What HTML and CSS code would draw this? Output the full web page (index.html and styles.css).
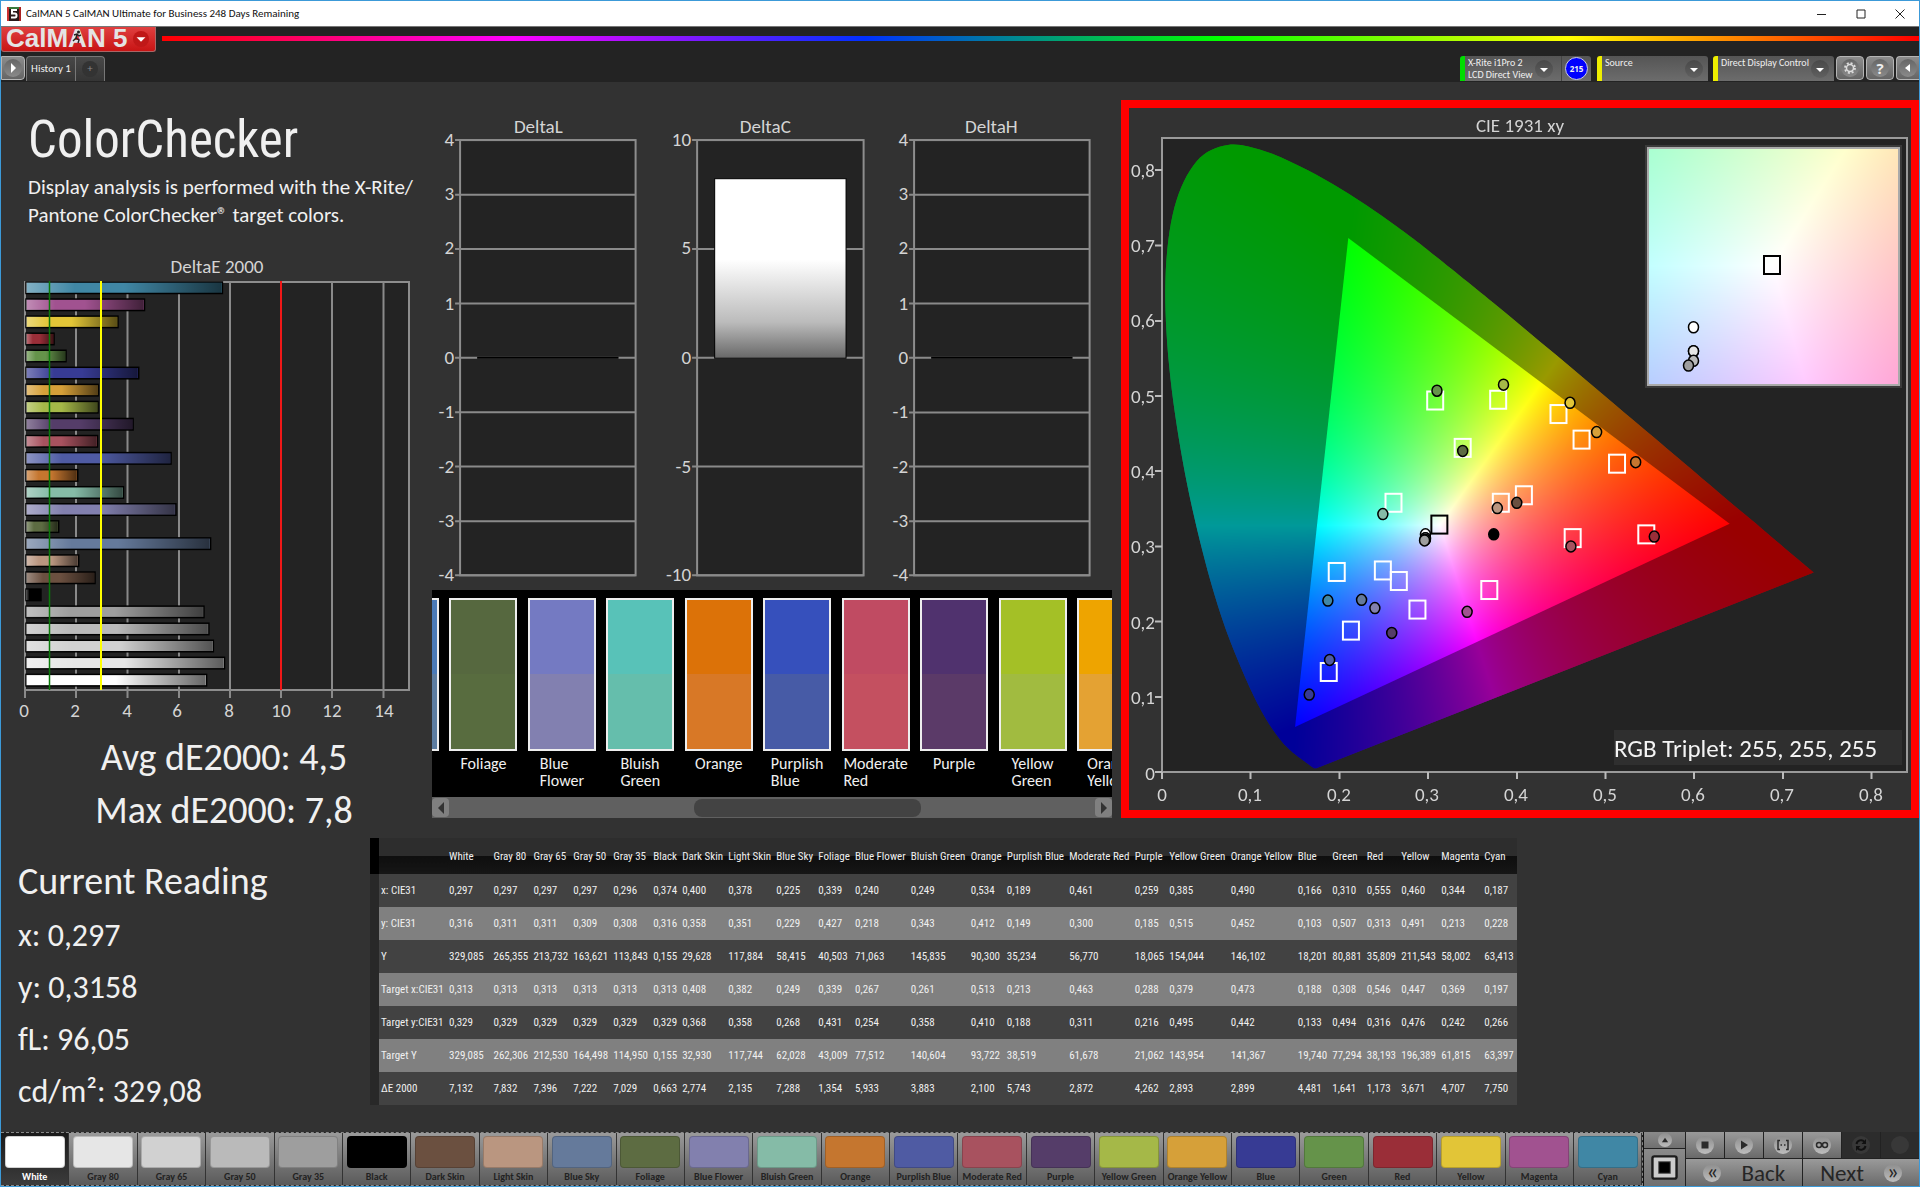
FILE: index.html
```html
<!DOCTYPE html>
<html lang="en">
<head>
<meta charset="utf-8">
<title>CalMAN 5</title>
<link rel="stylesheet" href="styles.css">
</head>
<body>
<header class="titlebar">
  <svg class="app-icon" viewBox="0 0 14 14" aria-hidden="true"><rect width="14" height="14" fill="#2a1a1a"/><rect width="2" height="14" fill="#c33"/><rect x="12" width="2" height="14" fill="#a22"/><rect x="2" width="10" height="2" fill="#3a7a3a"/><path d="M10 3H5v3.500h3q1.500 0 1.500 2t-1.500 2H4" fill="none" stroke="#fff" stroke-width="2"/></svg>
  <span class="app-title">CalMAN 5 CalMAN Ultimate for Business 248 Days Remaining</span>
  <div class="window-buttons">
    <button type="button" aria-label="Minimize"><svg viewBox="0 0 10 10"><path d="M0 5.500h9"/></svg></button>
    <button type="button" aria-label="Maximize"><svg viewBox="0 0 10 10"><path d="M1 1h8v8h-8z"/></svg></button>
    <button type="button" aria-label="Close"><svg viewBox="0 0 10 10"><path d="M.5.5l9 9M9.500.5l-9 9"/></svg></button>
  </div>
</header>

<div class="brandbar">
  <button type="button" class="brand"><span>CalMAN 5</span><svg class="runner" viewBox="0 0 10 14" aria-hidden="true"><circle cx="6.500" cy="2" r="1.500" fill="#222"/><path d="M2 5l3-1 2 2 2-1M5 4.500L4 8l3 2-1 3M4 8l-3 3" fill="none" stroke="#222" stroke-width="1.400"/></svg><i class="knob red"><svg viewBox="0 0 18 18"><path d="M4 7h10l-5 5z" fill="#fff"/></svg></i></button>
  <div class="rainbow"></div>
</div>

<nav class="toolbar">
  <button type="button" class="key play" aria-label="Show history"><i class="knob"><svg viewBox="0 0 18 18"><path d="M7 4l5 5-5 5z" fill="#fff"/></svg></i></button>
  <div class="tabs">
    <button type="button" class="tab">History 1</button>
    <button type="button" class="tab add" aria-label="Add tab"><i class="knob dark">+</i></button>
  </div>
  <div class="devices">
    <button type="button" class="device green meter"><span>X-Rite i1Pro 2<br>LCD Direct View</span><i class="knob dark"><svg viewBox="0 0 18 18"><path d="M5 8h8l-4 4z" fill="#fff"/></svg></i></button>
    <button type="button" class="count"><b>215</b></button>
    <button type="button" class="device source"><span>Source</span><i class="knob dark"><svg viewBox="0 0 18 18"><path d="M5 8h8l-4 4z" fill="#fff"/></svg></i></button>
    <button type="button" class="device display"><span>Direct Display Control</span><i class="knob dark"><svg viewBox="0 0 18 18"><path d="M5 8h8l-4 4z" fill="#fff"/></svg></i></button>
    <button type="button" class="key" aria-label="Settings"><i class="knob"><svg viewBox="0 0 18 18"><circle cx="9" cy="9" r="3.500" fill="none" stroke="#ddd" stroke-width="1.500"/><circle cx="9" cy="9" r="5" fill="none" stroke="#ddd" stroke-width="1.800" stroke-dasharray="2 1.930"/></svg></i></button>
    <button type="button" class="key" aria-label="Help"><i class="knob help">?</i></button>
    <button type="button" class="key last" aria-label="Collapse"><i class="knob"><svg viewBox="0 0 18 18"><path d="M11 5L6 9l5 4z" fill="#fff"/></svg></i></button>
  </div>
</nav>

<main>
  <div class="charts">
    <section class="summary">
      <h1>ColorChecker</h1>
      <p class="intro">Display analysis is performed with the X-Rite/<br>Pantone ColorChecker® target colors.</p>
      <svg class="chart" viewBox="0 0 431 468" role="img" aria-label="DeltaE 2000">
        <defs><linearGradient id="sheen"><stop offset="0" stop-color="#fff" stop-opacity=".35"/><stop offset=".25" stop-color="#fff" stop-opacity="0"/><stop offset=".5" stop-color="#000" stop-opacity="0"/><stop offset="1" stop-color="#000" stop-opacity=".6"/></linearGradient></defs>
        <rect class="plot" x="24" y="28" width="384" height="408"/>
        <path class="grid" d="M75 28v416M126.500 28v416M178 28v416M229 28v416M280 28v416M331 28v416M382.500 28v416M24 436v8"/>
        <g id="bars"></g>
        <path d="M48.500 27v409" stroke="#0a7a0a" stroke-width="1.500"/><path d="M100 27v409" stroke="#ff0" stroke-width="2"/><path d="M280 27v409" stroke="#f01818" stroke-width="2"/>
        <g class="mid"><text x="216" y="19">DeltaE 2000</text>
        <text x="23" y="463">0</text><text x="74" y="463">2</text><text x="126" y="463">4</text><text x="176" y="463">6</text><text x="228" y="463">8</text><text x="280" y="463">10</text><text x="331" y="463">12</text><text x="383" y="463">14</text></g>
      </svg>
      <div class="stats"><p>Avg dE2000: 4,5</p><p>Max dE2000: 7,8</p></div>
    </section>

    <section class="middle">
      <div class="deltas">
        <svg class="chart" viewBox="0 0 226 472" role="img" aria-label="DeltaL">
          <rect class="plot" x="28" y="28" width="175" height="434"/>
          <path class="grid" d="M23 28h180M23 82.500h180M23 136.500h180M23 191h180M23 245h180M23 299.500h180M23 353.500h180M23 408h180M23 462h180"/>
          <path d="M45 245h141" stroke="#000" stroke-width="2"/>
          <text class="mid" x="106" y="21">DeltaL</text>
          <g class="end"><text x="22" y="34">4</text><text x="22" y="88">3</text><text x="22" y="142">2</text><text x="22" y="197">1</text><text x="22" y="251">0</text><text x="22" y="305">-1</text><text x="22" y="360">-2</text><text x="22" y="414">-3</text><text x="22" y="468">-4</text></g>
        </svg>
        <svg class="chart" viewBox="0 0 226 472" role="img" aria-label="DeltaC">
          <defs><linearGradient id="fade" x2="0" y2="1"><stop offset=".45" stop-color="#fff"/><stop offset=".8" stop-color="#bbb"/><stop offset="1" stop-color="#686868"/></linearGradient></defs>
          <rect class="plot" x="38" y="28" width="166" height="434"/>
          <path class="grid" d="M33 28h171M33 136.500h171M33 245h171M33 353.500h171M33 462h171"/>
          <rect x="55.500" y="66.500" width="131" height="179" fill="url(#fade)" stroke="#000"/>
          <text class="mid" x="106" y="21">DeltaC</text>
          <g class="end"><text x="32" y="34">10</text><text x="32" y="142">5</text><text x="32" y="251">0</text><text x="32" y="360">-5</text><text x="32" y="468">-10</text></g>
        </svg>
        <svg class="chart" viewBox="0 0 226 472" role="img" aria-label="DeltaH">
          <rect class="plot" x="29" y="28" width="175" height="434"/>
          <path class="grid" d="M24 28h180M24 82.500h180M24 136.500h180M24 191h180M24 245h180M24 299.500h180M24 353.500h180M24 408h180M24 462h180"/>
          <path d="M46 245h141" stroke="#000" stroke-width="2"/>
          <text class="mid" x="106" y="21">DeltaH</text>
          <g class="end"><text x="23" y="34">4</text><text x="23" y="88">3</text><text x="23" y="142">2</text><text x="23" y="197">1</text><text x="23" y="251">0</text><text x="23" y="305">-1</text><text x="23" y="360">-2</text><text x="23" y="414">-3</text><text x="23" y="468">-4</text></g>
        </svg>
      </div>
      <div class="compare">
        <ul>
          <li><i style="--a:#4a7ab8;--b:#5c7ca0"></i><span>Blue Sky</span></li>
          <li><i style="--a:#56683f;--b:#586c3f"></i><span>Foliage</span></li>
          <li><i style="--a:#747ac2;--b:#8280b0"></i><span>Blue Flower</span></li>
          <li><i style="--a:#58c2b8;--b:#65beac"></i><span>Bluish Green</span></li>
          <li><i style="--a:#dc7208;--b:#d87826"></i><span>Orange</span></li>
          <li><i style="--a:#3650bc;--b:#475ba6"></i><span>Purplish Blue</span></li>
          <li><i style="--a:#c04b62;--b:#c45060"></i><span>Moderate Red</span></li>
          <li><i style="--a:#50326e;--b:#5b3a68"></i><span>Purple</span></li>
          <li><i style="--a:#a4c026;--b:#a1bb40"></i><span>Yellow Green</span></li>
          <li><i style="--a:#eea400;--b:#e4a233"></i><span>Orange Yellow</span></li>
        </ul>
        <div class="scroll">
          <button type="button" aria-label="Scroll left"><svg viewBox="0 0 16 18"><path d="M11 3v12L5 9z"/></svg></button>
          <div class="track"><div class="thumb"></div></div>
          <button type="button" aria-label="Scroll right"><svg viewBox="0 0 16 18"><path d="M5 3v12l6-6z"/></svg></button>
        </div>
      </div>
    </section>

    <section class="cie">
      <canvas id="gamut" width="782" height="702"></canvas>
      <svg class="chart" viewBox="0 0 782 702" role="img" aria-label="CIE 1931 xy">
        <rect x="33" y="30" width="745" height="634" fill="none" stroke="#9a9a9a" stroke-width="2"/>
        <path class="grid ticks" d="M26 62h7M26 137.500h7M26 213h7M26 288h7M26 363h7M26 438.500h7M26 513.500h7M26 589h7M26 664h7M33 664v7M121.500 664v7M210.500 664v7M299 664v7M388 664v7M476.500 664v7M565 664v7M654 664v7M742.500 664v7"/>
        <g class="mid"><text x="391" y="24">CIE 1931 xy</text><text x="33" y="693">0</text><text x="121" y="693">0,1</text><text x="210" y="693">0,2</text><text x="298" y="693">0,3</text><text x="387" y="693">0,4</text><text x="476" y="693">0,5</text><text x="564" y="693">0,6</text><text x="653" y="693">0,7</text><text x="742" y="693">0,8</text></g>
        <g class="end"><text x="26" y="69">0,8</text><text x="26" y="144">0,7</text><text x="26" y="219">0,6</text><text x="26" y="295">0,5</text><text x="26" y="370">0,4</text><text x="26" y="445">0,3</text><text x="26" y="521">0,2</text><text x="26" y="596">0,1</text><text x="26" y="672">0</text></g>
        <g id="markers"></g>
        <path d="M516 37h257v243h-257zM519 40v237h251v-237z" fill="#3a3a3a" fill-rule="evenodd"/>
        <rect x="519" y="40" width="251" height="237" fill="none" stroke="#aaa" stroke-width="2"/>
        <g id="inset-markers"></g>
        <rect x="485" y="622" width="288" height="35" fill="#2f2f2f"/>
        <text class="triplet" x="485" y="649">RGB Triplet: 255, 255, 255</text>
      </svg>
    </section>
  </div>

  <div class="readouts">
    <section class="reading">
      <h2>Current Reading</h2>
      <p>x: 0,297</p><p>y: 0,3158</p><p>fL: 96,05</p><p>cd/m²: 329,08</p>
    </section>
    <table id="results">
      <thead><tr><th></th><th>White</th><th>Gray 80</th><th>Gray 65</th><th>Gray 50</th><th>Gray 35</th><th>Black</th><th>Dark Skin</th><th>Light Skin</th><th>Blue Sky</th><th>Foliage</th><th>Blue Flower</th><th>Bluish Green</th><th>Orange</th><th>Purplish Blue</th><th>Moderate Red</th><th>Purple</th><th>Yellow Green</th><th>Orange Yellow</th><th>Blue</th><th>Green</th><th>Red</th><th>Yellow</th><th>Magenta</th><th>Cyan</th></tr></thead>
      <tbody>
        <tr><th>x: CIE31</th><td>0,297</td><td>0,297</td><td>0,297</td><td>0,297</td><td>0,296</td><td>0,374</td><td>0,400</td><td>0,378</td><td>0,225</td><td>0,339</td><td>0,240</td><td>0,249</td><td>0,534</td><td>0,189</td><td>0,461</td><td>0,259</td><td>0,385</td><td>0,490</td><td>0,166</td><td>0,310</td><td>0,555</td><td>0,460</td><td>0,344</td><td>0,187</td></tr>
        <tr><th>y: CIE31</th><td>0,316</td><td>0,311</td><td>0,311</td><td>0,309</td><td>0,308</td><td>0,316</td><td>0,358</td><td>0,351</td><td>0,229</td><td>0,427</td><td>0,218</td><td>0,343</td><td>0,412</td><td>0,149</td><td>0,300</td><td>0,185</td><td>0,515</td><td>0,452</td><td>0,103</td><td>0,507</td><td>0,313</td><td>0,491</td><td>0,213</td><td>0,228</td></tr>
        <tr><th>Y</th><td>329,085</td><td>265,355</td><td>213,732</td><td>163,621</td><td>113,843</td><td>0,155</td><td>29,628</td><td>117,884</td><td>58,415</td><td>40,503</td><td>71,063</td><td>145,835</td><td>90,300</td><td>35,234</td><td>56,770</td><td>18,065</td><td>154,044</td><td>146,102</td><td>18,201</td><td>80,881</td><td>35,809</td><td>211,543</td><td>58,002</td><td>63,413</td></tr>
        <tr><th>Target x:CIE31</th><td>0,313</td><td>0,313</td><td>0,313</td><td>0,313</td><td>0,313</td><td>0,313</td><td>0,408</td><td>0,382</td><td>0,249</td><td>0,339</td><td>0,267</td><td>0,261</td><td>0,513</td><td>0,213</td><td>0,463</td><td>0,288</td><td>0,379</td><td>0,473</td><td>0,188</td><td>0,308</td><td>0,546</td><td>0,447</td><td>0,369</td><td>0,197</td></tr>
        <tr><th>Target y:CIE31</th><td>0,329</td><td>0,329</td><td>0,329</td><td>0,329</td><td>0,329</td><td>0,329</td><td>0,368</td><td>0,358</td><td>0,268</td><td>0,431</td><td>0,254</td><td>0,358</td><td>0,410</td><td>0,188</td><td>0,311</td><td>0,216</td><td>0,495</td><td>0,442</td><td>0,133</td><td>0,494</td><td>0,316</td><td>0,476</td><td>0,242</td><td>0,266</td></tr>
        <tr><th>Target Y</th><td>329,085</td><td>262,306</td><td>212,530</td><td>164,498</td><td>114,950</td><td>0,155</td><td>32,930</td><td>117,744</td><td>62,028</td><td>43,009</td><td>77,512</td><td>140,604</td><td>93,722</td><td>38,519</td><td>61,678</td><td>21,062</td><td>143,954</td><td>141,367</td><td>19,740</td><td>77,294</td><td>38,193</td><td>196,389</td><td>61,815</td><td>63,397</td></tr>
        <tr><th>ΔE 2000</th><td>7,132</td><td>7,832</td><td>7,396</td><td>7,222</td><td>7,029</td><td>0,663</td><td>2,774</td><td>2,135</td><td>7,288</td><td>1,354</td><td>5,933</td><td>3,883</td><td>2,100</td><td>5,743</td><td>2,872</td><td>4,262</td><td>2,893</td><td>2,899</td><td>4,481</td><td>1,641</td><td>1,173</td><td>3,671</td><td>4,707</td><td>7,750</td></tr>
      </tbody>
    </table>
  </div>
</main>

<footer class="controls">
  <div class="patches" id="patches">
    <button type="button" class="selected" style="--c:#ffffff"><i></i>White</button>
    <button type="button" style="--c:#e6e6e6"><i></i>Gray 80</button>
    <button type="button" style="--c:#d1d1d1"><i></i>Gray 65</button>
    <button type="button" style="--c:#bababa"><i></i>Gray 50</button>
    <button type="button" style="--c:#9e9e9e"><i></i>Gray 35</button>
    <button type="button" style="--c:#000000"><i></i>Black</button>
    <button type="button" style="--c:#6b5040"><i></i>Dark Skin</button>
    <button type="button" style="--c:#ba9680"><i></i>Light Skin</button>
    <button type="button" style="--c:#657a9b"><i></i>Blue Sky</button>
    <button type="button" style="--c:#5d6c42"><i></i>Foliage</button>
    <button type="button" style="--c:#8280ae"><i></i>Blue Flower</button>
    <button type="button" style="--c:#85bba7"><i></i>Bluish Green</button>
    <button type="button" style="--c:#c5762f"><i></i>Orange</button>
    <button type="button" style="--c:#4f5ba3"><i></i>Purplish Blue</button>
    <button type="button" style="--c:#a8525f"><i></i>Moderate Red</button>
    <button type="button" style="--c:#553d69"><i></i>Purple</button>
    <button type="button" style="--c:#a5b848"><i></i>Yellow Green</button>
    <button type="button" style="--c:#d6a039"><i></i>Orange Yellow</button>
    <button type="button" style="--c:#373b94"><i></i>Blue</button>
    <button type="button" style="--c:#65934a"><i></i>Green</button>
    <button type="button" style="--c:#9a2e38"><i></i>Red</button>
    <button type="button" style="--c:#e2c537"><i></i>Yellow</button>
    <button type="button" style="--c:#a15290"><i></i>Magenta</button>
    <button type="button" style="--c:#4087a5"><i></i>Cyan</button>
  </div>
  <div class="patch-window">
    <button type="button" aria-label="More"><i class="knob pale small"><svg viewBox="0 0 18 18"><path d="M5 12l4-6 4 6z"/></svg></i></button>
    <button type="button" class="stop-box" aria-label="Pattern window"><svg viewBox="0 0 28 26"><rect x="1.500" y="1.500" width="25" height="23" rx="2" fill="#ccc" stroke="#1c1c1c" stroke-width="2.500"/><rect x="8" y="7" width="12" height="12" fill="#000" stroke="#555"/></svg></button>
  </div>
  <div class="transport">
    <button type="button" aria-label="Stop"><i class="knob pale"><svg viewBox="0 0 18 18"><path d="M5.500 5.500h7v7h-7z"/></svg></i></button>
    <button type="button" aria-label="Play"><i class="knob pale"><svg viewBox="0 0 18 18"><path d="M6 4.500L13 9l-7 4.500z"/></svg></i></button>
    <button type="button" aria-label="Read series"><i class="knob pale"><svg viewBox="0 0 18 18"><path d="M6 4.500H4v9h2M12 4.500h2v9h-2M6.500 9h1.500M10 9h1.500" fill="none" stroke="#2b2b2b" stroke-width="1.500"/></svg></i></button>
    <button type="button" aria-label="Continuous"><i class="knob pale"><svg viewBox="0 0 18 18"><g fill="none" stroke="#2b2b2b" stroke-width="1.500"><circle cx="6" cy="9" r="2.500"/><circle cx="12" cy="9" r="2.500"/></g></svg></i></button>
    <button type="button" class="off" aria-label="Refresh"><i class="knob"><svg viewBox="0 0 18 18"><path d="M4.500 8a4.500 4.500 0 0 1 8-2M13.500 10a4.500 4.500 0 0 1-8 2" fill="none" stroke="#111" stroke-width="2"/><path d="M14 3v5H9.500zM4 15v-5h4.500z" fill="#111"/></svg></i></button>
    <button type="button" class="off" aria-label="Record"><i class="knob"></i></button>
    <button type="button" class="wide"><i class="knob pale">«</i>Back</button>
    <button type="button" class="wide">Next<i class="knob pale">»</i></button>
  </div>
</footer>
<script src="script.js"></script>
</body>
</html>
```
FILE: styles.css
```css
* { box-sizing: border-box; }
body {
  margin: 0; min-height: 100vh; display: flex; flex-direction: column;
  border: 1px solid #3c9ad8; background: #323232; color: #f0f0f0;
  font-family: Carlito, Lato, "Open Sans", sans-serif;
}
button { margin: 0; padding: 0; border: 0; background: none; color: inherit; font: inherit; display: flex; align-items: center; justify-content: center; }
h1, h2, p, ul { margin: 0; padding: 0; font-weight: normal; list-style: none; }
svg { display: block; }

/* window frame */
.titlebar { height: 25px; background: #fff; color: #111; display: flex; align-items: center; gap: 5px; padding-left: 6px; }
.app-icon { width: 14px; height: 14px; }
.app-title { font-size: 11px; }
.window-buttons { margin-left: auto; display: flex; }
.window-buttons button { width: 39px; height: 24px; }
.window-buttons svg { width: 10px; height: 10px; fill: none; stroke: #222; stroke-width: 1; }

.brandbar { height: 30px; background: #232323; border-top: 1px solid #777; display: flex; gap: 6px; }
.brand { width: 155px; height: 25px; padding: 0 6px 0 4px; position: relative; justify-content: space-between; border-radius: 0 0 3px 3px; background: linear-gradient(#e04040, #c81414); border: 1px solid #a66; border-top: 0; }
.brand span { font: bold 26px/22px "Liberation Sans", Arial, sans-serif; color: #e4e4e4; padding-bottom: 3px; white-space: nowrap; }
.runner { position: absolute; left: 70px; top: 3px; width: 10px; height: 14px; }
.rainbow { flex: 1; height: 5px; margin-top: 9px; background: linear-gradient(90deg, #f00, #f0f 20%, #0030ff 40%, #0f0 60%, #ff0 80%, #f00); }

.knob { width: 18px; height: 18px; border-radius: 50%; background: linear-gradient(#666, #8a8a8a); display: flex; align-items: center; justify-content: center; font-style: normal; }
.knob svg { width: 18px; height: 18px; }
.knob.red { width: 16px; height: 16px; background: #c01818; }
.knob.dark { background: linear-gradient(#484848, #606060); }
.knob.pale { background: linear-gradient(#8e8e8e, #bdbdbd); fill: #2b2b2b; }
.knob.small { width: 14px; height: 14px; }
.knob.help { font: bold 15px "Open Sans", sans-serif; color: #eee; }

/* tabs and device pickers */
.toolbar { height: 26px; background: #232323; display: flex; align-items: flex-start; font-size: 11px; line-height: 12px; }
.key { width: 28px; height: 24px; border: 1px solid #b5b5b5; border-radius: 4px; background: linear-gradient(#8c8c8c, #656565); }
.play { width: 24px; border-radius: 0 4px 4px 0; }
.key.last { width: 23px; border-right: 0; border-radius: 4px 0 0 4px; }
.tabs { display: flex; margin-left: 1px; }
.tab { height: 25px; width: 50px; border: 1px solid #777; border-bottom: 0; border-radius: 4px 0 0 0; background: linear-gradient(#484848, #353535); }
.tab.add { width: 29px; border-radius: 0 4px 0 0; border-left: 0; }
.tab .knob { background: #333; color: #888; width: 16px; height: 16px; }
.devices { margin-left: auto; display: flex; gap: 2px; }
.device { height: 25px; justify-content: space-between; align-items: flex-start; padding: 1px 8px 0 3px; border-left: 5px solid #ee0; border-radius: 3px 3px 0 0; background: linear-gradient(#555, #6c6c6c); text-align: left; font-size: 10px; white-space: nowrap; }
.device .knob { margin-top: 3px; }
.device.green { border-left-color: #0d0; }
.meter { width: 101px; margin-right: -2px; border-radius: 3px 0 0 0; }
.count { width: 30px; height: 25px; margin-right: 4px; border-left: 1px solid #444; background: linear-gradient(#555, #6c6c6c); border-radius: 0 3px 0 0; }
.count b { width: 23px; height: 23px; border: 1px solid #ccd; border-radius: 50%; background: #00f; font: bold 8px/21px "Open Sans", sans-serif; }
.source { width: 111px; margin-right: 3px; padding-right: 5px; }
.display { width: 121px; padding-right: 5px; }

/* chart row */
main { flex: 1; display: flex; flex-direction: column; }
.charts { display: grid; grid-template-columns: 431fr 689fr 798fr; align-items: start; padding-top: 18px; }
.chart { width: 100%; font-size: 19px; fill: #d4d4d4; }
.plot { fill: #232323; stroke: #8d8d8d; stroke-width: 2; }
.grid { fill: none; stroke: #8a8a8a; stroke-width: 2; }
.ticks { stroke: #bbb; }
.mid { text-anchor: middle; }
.end { text-anchor: end; }
.summary h1 { padding: 8px 0 0 27px; font: 51px/64px "Roboto Condensed", Carlito, sans-serif; }
.intro { padding: 1px 0 25px 27px; font-size: 21px; line-height: 28px; white-space: nowrap; }
.stats { font-size: 38px; line-height: 53px; padding-top: 9px; padding-left: 15px; text-align: center; }
.middle { padding: 12px 9px 0 0; }
.deltas { display: grid; grid-template-columns: repeat(3, 1fr); }
.compare { margin-top: 5px; background: #000; overflow: hidden; }
.compare ul { height: 207px; margin: 0 -33px 0 -61px; padding-top: 8px; display: flex; justify-content: space-between; }
.compare li { width: 68px; display: flex; flex-direction: column; align-items: center; gap: 4px; font-size: 16px; line-height: 17px; }
.compare li i { width: 68px; height: 153px; border: 2px solid #eee; background: linear-gradient(var(--a) 50%, var(--b) 50%); }
.compare li span { width: min-content; }
.scroll { height: 21px; background: #606060; display: flex; align-items: center; }
.scroll button { width: 17px; height: 19px; border-radius: 4px; background: #808080; }
.scroll svg { width: 16px; height: 18px; fill: #333; }
.track { flex: 1; height: 18px; }
.thumb { width: 35%; height: 18px; margin-left: 38%; border-radius: 8px; background: #434343; }
.cie { border: 8px solid #f00; position: relative; }
.cie canvas { display: block; width: 100%; }
.cie .chart { position: absolute; inset: 0; height: 100%; }
.triplet { font-size: 25px; fill: #f4f4f4; }

/* readings */
.readouts { display: flex; align-items: flex-start; padding-top: 1px; }
.reading { width: 369px; padding: 14px 0 0 17px; font-size: 32px; line-height: 52px; }
.reading h2 { font-size: 38px; line-height: 58px; }
table { width: 1147px; border-collapse: collapse; font: 11px "Roboto Condensed", "Open Sans Condensed", sans-serif; white-space: nowrap; }
th, td { padding: 0 3px 0 2px; text-align: left; font-weight: normal; height: 33px; }
thead th { height: 36px; background: linear-gradient(#2d2d2d 50%, #0e0e0e 50%, #161616); }
th:first-child { border-left: 9px solid #282828; }
thead th:first-child { border-left-color: #000; }
tbody tr { background: #424242; }
tbody tr:nth-child(even) { background: #808080; }

/* bottom bar */
.controls { display: flex; height: 54px; background: #222; }
.patches { flex: 1644; display: grid; grid-template-columns: repeat(24, 1fr); border: 1px dashed #888; border-width: 1px 1px 1px 0; color: #222; font-size: 10px; line-height: 12px; font-weight: bold; }
.patches button { flex-direction: column; justify-content: flex-start; gap: 3px; padding-top: 3px; border-right: 1px solid #333; background: linear-gradient(#9a9a9a, #5a5a5a); white-space: nowrap; }
.patches i { width: 60px; height: 32px; border-radius: 4px; background: var(--c); border: 1px solid rgba(0,0,0,.18); }
.patches .selected { background: linear-gradient(#1a1a1a, #3c3c3c); color: #fff; }
.patch-window { flex: 41; display: grid; grid-template-rows: 16px 1fr; gap: 1px; border-left: 1px solid #111; }
.patch-window button { background: linear-gradient(#8a8a8a, #707070); }
.stop-box svg { width: 27px; height: 27px; }
.transport { flex: 233; display: grid; grid-template: 26px 27px / repeat(6, 1fr); gap: 1px; margin-left: 1px; color: #262626; }
.transport button { background: linear-gradient(#9a9a9a, #6a6a6a); font-size: 23px; gap: 20px; line-height: 24px; }
.transport .off { background: #2c2c2c; }
.transport .off .knob { background: #383838; }
.transport .wide { grid-column: span 3; }
.transport .wide .knob { padding-bottom: 4px; }
```
FILE: script.js
```js
const cells = row => [...document.querySelectorAll(`#results tbody tr:nth-child(${row}) td`)]
  .map(td => parseFloat(td.textContent.replace(',', '.')));
const xs = cells(1), ys = cells(2), tx = cells(4), ty = cells(5), de = cells(7);
const colors = [...document.querySelectorAll('#patches button')].map(b => b.style.getPropertyValue('--c'));
const NS = 'http://www.w3.org/2000/svg';
function add(parent, tag, attrs) {
  const el = document.createElementNS(NS, tag);
  for (const k in attrs) el.setAttribute(k, attrs[k]);
  parent.appendChild(el);
}

// DeltaE bars, last patch on top
const bars = document.getElementById('bars');
de.forEach((v, i) => {
  const y = 28 + (23 - i) * 17.06, w = v * 25.6 - 2;
  add(bars, 'rect', { x: 25, y, width: w, height: 11.5, fill: colors[i], stroke: '#000', 'stroke-width': 1.5 });
  add(bars, 'rect', { x: 25, y: y + .5, width: w - 1, height: 10.5, fill: 'url(#sheen)' });
});

// chromaticity diagram
const X0 = 33, Y0 = 664, SX = 887, SY = 752, WX = .3127, WY = .329;
const locus = [[.1741,.005],[.1714,.0051],[.1689,.0069],[.1644,.0109],[.1566,.0177],[.151,.0227],[.144,.0297],[.1355,.0399],[.1241,.0578],[.1096,.0868],[.0913,.1327],[.0687,.2007],[.0454,.295],[.0235,.4127],[.0082,.5384],[.0039,.6548],[.0139,.7502],[.0389,.812],[.0743,.8338],[.1142,.8262],[.1547,.8059],[.1929,.7816],[.2296,.7543],[.2658,.7243],[.3016,.6923],[.3731,.6245],[.4441,.5547],[.5125,.4866],[.5752,.4242],[.627,.3725],[.6658,.334],[.6915,.3083],[.719,.2809],[.73,.27],[.7347,.2653]]
  .map(([x, y]) => [X0 + x * SX, Y0 - y * SY]);
const canvas = document.getElementById('gamut'), ctx = canvas.getContext('2d');
const tri = new Path2D();
[[.64, .33], [.21, .71], [.15, .06]].forEach(([x, y]) => tri.lineTo(X0 + x * SX, Y0 - y * SY));
tri.closePath();

// smooth curve through every locus point
const shape = new Path2D();
shape.moveTo(...locus[0]);
for (let i = 0; i < locus.length - 1; i++) {
  const b = locus[i], c = locus[i + 1], a = locus[i - 1] || b, d = locus[i + 2] || c;
  shape.bezierCurveTo(b[0] + (c[0] - a[0]) / 6, b[1] + (c[1] - a[1]) / 6, c[0] - (d[0] - b[0]) / 6, c[1] - (d[1] - b[1]) / 6, c[0], c[1]);
}
shape.closePath();

function rgb(x, y) {
  const X = x / y, Z = (1 - x - y) / y;
  const lin = [2.0414 * X - .5649 - .3447 * Z, -.9693 * X + 1.876 + .0416 * Z, .0134 * X - .1184 + 1.0154 * Z].map(v => Math.max(v, 0));
  const m = Math.max(...lin);
  return lin.map(v => 255 * v / m);
}
function raster(w, h, at) {
  const c = document.createElement('canvas'); c.width = w; c.height = h;
  const g = c.getContext('2d'), d = g.createImageData(w, h);
  for (let j = 0; j < h; j++) for (let i = 0; i < w; i++) {
    const [x, y] = at(i, j), p = 4 * (j * w + i), col = rgb(x, Math.max(y, .001));
    d.data[p] = col[0]; d.data[p + 1] = col[1]; d.data[p + 2] = col[2]; d.data[p + 3] = 255;
  }
  g.putImageData(d, 0, 0);
  return c;
}
ctx.fillStyle = '#232323';
ctx.fillRect(33, 30, 745, 634);
const full = raster(782, 702, (i, j) => [(i - X0) / SX, (Y0 - j) / SY]);
ctx.save(); ctx.clip(shape); ctx.drawImage(full, 0, 0);
ctx.fillStyle = 'rgba(0,0,0,.4)'; ctx.fillRect(0, 0, 782, 702); ctx.restore();
ctx.save(); ctx.clip(tri); ctx.drawImage(full, 0, 0); ctx.restore();
const IX = 643, IY = 157;
ctx.drawImage(raster(251, 237, (i, j) => [WX + (i + 519 - IX) / 5000, WY - (j + 40 - IY) / 4788]), 519, 40);

// targets are squares, measurements are dots
const main = document.getElementById('markers'), inset = document.getElementById('inset-markers');
function square(g, cx, cy, stroke) { add(g, 'rect', { x: cx - 8, y: cy - 9, width: 16, height: 18, fill: 'none', stroke, 'stroke-width': 2 }); }
function dot(g, cx, cy, fill) { add(g, 'ellipse', { cx, cy, rx: 5, ry: 5.5, fill, stroke: '#000', 'stroke-width': 1.5 }); }
tx.forEach((x, i) => { if (i > 5) square(main, X0 + x * SX, Y0 - ty[i] * SY, '#fff'); });
square(main, X0 + WX * SX, Y0 - WY * SY, '#000');
xs.forEach((x, i) => dot(main, X0 + x * SX, Y0 - ys[i] * SY, colors[i]));
square(inset, IX, IY, '#000');
add(inset, 'rect', { x: IX - 6, y: IY - 7, width: 12, height: 14, fill: 'none', stroke: '#fff' });
for (const i of [0, 2, 1, 3, 4]) dot(inset, IX + (xs[i] - WX) * 5000, IY - (ys[i] - WY) * 4788, colors[i]);
```
